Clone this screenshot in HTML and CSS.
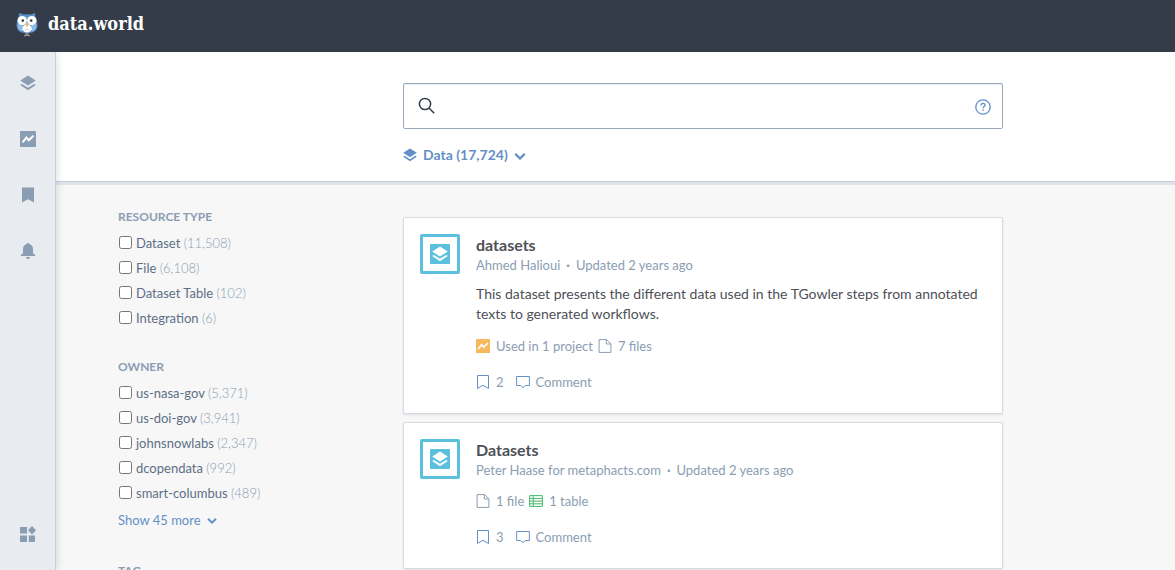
FILE: index.html
```html
<!DOCTYPE html>
<html lang="en">
<head>
    <meta charset="UTF-8">
    <meta name="viewport" content="width=device-width, initial-scale=1.0">
    <title>Search | data.world</title>
    <link rel="stylesheet" href="styles.css">
</head>
<body>
    <!-- shared icons -->
    <svg class="sprite" aria-hidden="true">
        <symbol id="icon-layers" viewBox="0 0 16 16">
            <path d="M8 .5 15.8 5.5 8 10.5 .2 5.5z"/>
            <path d="M1.9 8.9 8 12.8 14.1 8.9 15.8 10 8 15.2 .2 10z"/>
        </symbol>
        <symbol id="icon-project" viewBox="0 0 16 16">
            <path d="M1 0h14a1 1 0 0 1 1 1v14a1 1 0 0 1-1 1H1a1 1 0 0 1-1-1V1a1 1 0 0 1 1-1z"/>
            <path class="icon-line" d="M2.6 11.400 6.400 6.600 8.800 9.200 13.400 4.800"/>
        </symbol>
        <symbol id="icon-bookmark" viewBox="0 0 14 16">
            <path d="M1.500 1.500h11v13L7 11.300l-5.500 3.200z"/>
        </symbol>
        <symbol id="icon-comment" viewBox="0 0 14 14">
            <path d="M.6 1.500h12.800v9H9.500L7 12.500 4.500 10.500H.6z"/>
        </symbol>
        <symbol id="icon-file" viewBox="0 0 13 14">
            <path d="M.6.6h7.600l4.200 4.200v8.600H.6z"/>
            <path d="M7.800.6v4.400h4.500"/>
        </symbol>
        <symbol id="icon-table" viewBox="0 0 14 12">
            <path d="M.6.6h12.800v10.800H.6zM.6 3.400h12.800M.6 6.100h12.800M.6 8.800h12.800M4.200.6v10.800"/>
        </symbol>
        <symbol id="icon-chevron" viewBox="0 0 10 6">
            <path d="M1 .8 5 4.700 9 .8"/>
        </symbol>
    </svg>

    <header class="topbar">
        <a class="brand" href="#">
            <svg class="brand-owl" viewBox="0 0 22 25" aria-hidden="true">
                <path fill="#5b8fc9" d="M3 1 7.500 2.600Q11 1.700 14.500 2.600L19 1l.3 4.500q2.700 4 2 9.500-.8 4-5 5.500-5.300 1.600-10.600 0Q1.500 19 .7 15 0 9.500 2.700 5.500z"/>
                <path fill="#8dbce6" d="M1.600 12q-.6 6 4.600 7.600L8 14zM20.400 12q.6 6-4.600 7.600L14 14z"/>
                <path fill="#fff" d="M11 11.500q4.500 2 5 6-2 3-5 3T6 17.500q.5-4 5-6z"/>
                <circle cx="6.200" cy="8.600" r="4.700" fill="#fff"/>
                <circle cx="15.800" cy="8.600" r="4.700" fill="#fff"/>
                <circle cx="6.800" cy="8.600" r="1.300" fill="#333c48"/>
                <circle cx="15.200" cy="8.600" r="1.300" fill="#333c48"/>
                <path fill="#e9b169" d="M9.300 11.800 11 10.600l1.700 1.200L11 15.400z"/>
                <path d="M8.500 17l1.200 1 1.300-1 1.300 1 1.200-1" fill="none" stroke="#a8c9e8" stroke-width=".7"/>
                <path d="M10 20.500V24M12 20.500V24M8 24.200l2-1.200h2l2 1.200" fill="none" stroke="#b5aa9b" stroke-width="1"/>
            </svg>
            <span class="brand-name">data.world</span>
        </a>
    </header>

    <div class="layout">
        <nav class="sidenav" aria-label="Main">
            <a class="sidenav-link" href="#" aria-label="Datasets"><svg><use href="#icon-layers"/></svg></a>
            <a class="sidenav-link" href="#" aria-label="Projects"><svg><use href="#icon-project"/></svg></a>
            <a class="sidenav-link" href="#" aria-label="Bookmarks"><svg viewBox="0 0 16 16"><path d="M2 .5h12v15L8 12.300 2 15.500z"/></svg></a>
            <a class="sidenav-link" href="#" aria-label="Notifications"><svg viewBox="0 0 16 16"><path d="M8 0c.8 0 1.200.5 1.300 1.100C11.700 1.700 13 3.600 13 6v4.300l2.300 1.900v.8H.7v-.8L3 10.300V6c0-2.400 1.300-4.300 3.700-4.900C6.800.5 7.200 0 8 0zM6 14h4a2 2 0 0 1-4 0z"/></svg></a>
            <a class="sidenav-link sidenav-apps" href="#" aria-label="Integrations"><svg viewBox="0 0 16 16"><path d="M0 1h7v6.500H0zM0 9.500h7V16H0zM8.800 9.500H15V16H8.800zM12 0l4 4.200-4 4.200-4-4.200z"/></svg></a>
        </nav>

        <main class="content">
            <section class="search">
                <div class="grid">
                    <form class="search-form">
                        <div class="search-box">
                            <svg class="search-icon" viewBox="0 0 18 18" aria-hidden="true"><circle cx="7" cy="7" r="5.600"/><path d="M11.200 11.200l5 5"/></svg>
                            <input class="search-input" type="text" aria-label="Search">
                            <button class="help" type="button" aria-label="Search help">
                                <svg viewBox="0 0 16 16"><circle cx="8" cy="8" r="7.200"/><path d="M6 6.400c0-2.600 4.100-2.500 4.100-.2C10.100 7.600 8.100 7.600 8.100 9.300M8.100 10.500v1.400"/></svg>
                            </button>
                        </div>
                        <button class="scope" type="button">
                            <svg class="scope-icon" aria-hidden="true"><use href="#icon-layers"/></svg>
                            Data (17,724)
                            <svg class="chevron" aria-hidden="true"><use href="#icon-chevron"/></svg>
                        </button>
                    </form>
                </div>
            </section>

            <div class="grid">
                <aside class="filters">
                    <section class="filter">
                        <h2>Resource type</h2>
                        <label><input type="checkbox">Dataset <span>(11,508)</span></label>
                        <label><input type="checkbox">File <span>(6,108)</span></label>
                        <label><input type="checkbox">Dataset Table <span>(102)</span></label>
                        <label><input type="checkbox">Integration <span>(6)</span></label>
                    </section>
                    <section class="filter">
                        <h2>Owner</h2>
                        <label><input type="checkbox">us-nasa-gov <span>(5,371)</span></label>
                        <label><input type="checkbox">us-doi-gov <span>(3,941)</span></label>
                        <label><input type="checkbox">johnsnowlabs <span>(2,347)</span></label>
                        <label><input type="checkbox">dcopendata <span>(992)</span></label>
                        <label><input type="checkbox">smart-columbus <span>(489)</span></label>
                        <button class="show-more" type="button">Show 45 more <svg class="chevron" aria-hidden="true"><use href="#icon-chevron"/></svg></button>
                    </section>
                    <section class="filter">
                        <h2>Tag</h2>
                    </section>
                </aside>

                <div class="results">
                    <article class="card">
                        <div class="avatar"><span><svg><use href="#icon-layers"/></svg></span></div>
                        <div class="card-body">
                            <h3><a href="#">datasets</a></h3>
                            <p class="byline"><a href="#">Ahmed Halioui</a><span class="dot">·</span>Updated 2 years ago</p>
                            <p class="description">This dataset presents the different data used in the TGowler steps from annotated texts to generated workflows.</p>
                            <div class="meta">
                                <span><svg class="icon-used"><use href="#icon-project"/></svg>Used in 1 project</span>
                                <span><svg class="icon-file"><use href="#icon-file"/></svg>7 files</span>
                            </div>
                            <div class="actions">
                                <button type="button"><svg><use href="#icon-bookmark"/></svg>2</button>
                                <button type="button"><svg class="icon-comment"><use href="#icon-comment"/></svg>Comment</button>
                            </div>
                        </div>
                    </article>

                    <article class="card">
                        <div class="avatar"><span><svg><use href="#icon-layers"/></svg></span></div>
                        <div class="card-body">
                            <h3><a href="#">Datasets</a></h3>
                            <p class="byline"><a href="#">Peter Haase for metaphacts.com</a><span class="dot">·</span>Updated 2 years ago</p>
                            <div class="meta">
                                <span><svg class="icon-file"><use href="#icon-file"/></svg>1 file</span>
                                <span><svg class="icon-table"><use href="#icon-table"/></svg>1 table</span>
                            </div>
                            <div class="actions">
                                <button type="button"><svg><use href="#icon-bookmark"/></svg>3</button>
                                <button type="button"><svg class="icon-comment"><use href="#icon-comment"/></svg>Comment</button>
                            </div>
                        </div>
                    </article>
                </div>
            </div>
        </main>
    </div>
</body>
</html>
```
FILE: styles.css
```css
* {
    box-sizing: border-box;
}

body {
    display: flex;
    flex-direction: column;
    height: 100vh;
    margin: 0;
    overflow: hidden;
    font-family: Lato, "Liberation Sans", sans-serif;
    font-size: 13px;
    line-height: 20px;
    color: #4e5057;
    background-color: #f7f7f7;
}

a {
    color: inherit;
    text-decoration: none;
}

button {
    display: inline-flex;
    align-items: center;
    padding: 0;
    border: none;
    background: none;
    font: inherit;
    color: inherit;
    cursor: pointer;
}

h2, h3, p {
    margin: 0;
}

.sprite {
    display: none;
}

/* header */
.topbar {
    display: flex;
    align-items: center;
    flex: none;
    height: 52px;
    padding: 0 16px 4px;
    background-color: #333c48;
}

.brand {
    display: flex;
    align-items: center;
    gap: 10px;
    color: #fff;
}

.brand-owl {
    width: 22px;
    height: 25px;
}

.brand-name {
    font-family: "DejaVu Serif Condensed", "DejaVu Serif", serif;
    font-size: 18px;
    font-weight: bold;
}

.layout {
    display: flex;
    flex: 1;
    min-height: 0;
}

/* left navigation */
.sidenav {
    display: flex;
    flex-direction: column;
    align-items: center;
    flex: none;
    gap: 40px;
    width: 56px;
    padding: 23px 0 28px;
    border-right: 1px solid #c6ced9;
    background-color: #e8ebf0;
    box-shadow: 0 0 8px rgba(51, 60, 72, 0.2);
    z-index: 1;
}

.sidenav-link {
    display: flex;
}

.sidenav-link svg {
    width: 16px;
    height: 16px;
    fill: #8b9db2;
}

.sidenav-apps {
    margin-top: auto;
}

.icon-line {
    fill: none;
    stroke: #fff;
    stroke-width: 2;
}

.content {
    flex: 1;
    min-width: 0;
}

.grid {
    display: grid;
    grid-template-columns: 253px 600px;
    column-gap: 32px;
    max-width: 995px;
    margin: 0 auto;
}

/* search */
.search {
    padding: 31px 0 15px;
    border-bottom: 3px solid #dfe3e9;
    background-color: #fff;
    box-shadow: inset 0 -1px #c6ced9;
}

.search-form {
    grid-column: 2;
}

.search-box {
    display: flex;
    align-items: center;
    height: 46px;
    padding: 0 11px 0 14px;
    border: 1px solid #9aa9ba;
    border-radius: 2px;
    box-shadow: inset 0 1px 1px rgba(51, 60, 72, 0.1);
}

.search-icon {
    width: 18px;
    height: 18px;
    fill: none;
    stroke: #333c48;
    stroke-width: 1.5;
}

.search-input {
    flex: 1;
    height: 40px;
    padding: 0 12px;
    border: none;
    outline: none;
    background: none;
    font: inherit;
}

.help {
    padding-top: 2px;
}

.help svg {
    width: 16px;
    height: 16px;
    fill: none;
    stroke: #5f8fca;
    stroke-width: 1.3;
}

.scope {
    gap: 6px;
    margin-top: 16px;
    font-size: 14px;
    font-weight: bold;
    color: #6590c6;
}

.scope-icon {
    width: 14px;
    height: 14px;
    fill: #6590c6;
}

.chevron {
    width: 10px;
    height: 6px;
    fill: none;
    stroke: #6590c6;
    stroke-width: 2;
}

.scope .chevron {
    width: 12px;
    height: 7px;
    margin-top: 2px;
}

/* filters */
.filters {
    padding-top: 24px;
}

.filter {
    display: flex;
    flex-direction: column;
    align-items: flex-start;
}

.filter + .filter {
    padding-top: 28px;
}

.filter h2 {
    padding-bottom: 6px;
    font-size: 12px;
    line-height: 16px;
    font-weight: bold;
    text-transform: uppercase;
    color: #8b9db2;
}

.filter label {
    line-height: 25px;
    color: #5d6f85;
}

.filter label input {
    margin: 0 4px 0 1px;
    vertical-align: -1px;
}

.filter label span {
    font-weight: 300;
    color: #8b9db2;
}

.show-more {
    gap: 6px;
    margin: 2px 0;
    line-height: 25px;
    color: #6590c6;
}

/* result cards */
.results {
    display: flex;
    flex-direction: column;
    align-self: start;
    gap: 8px;
    padding-top: 32px;
}

.card {
    display: flex;
    gap: 16px;
    padding: 16px 16px 21px;
    border: 1px solid #d6dae2;
    border-radius: 2px;
    background-color: #fff;
    box-shadow: 0 1px 2px rgba(51, 60, 72, 0.12);
}

.avatar {
    display: flex;
    align-items: center;
    justify-content: center;
    flex: none;
    width: 40px;
    height: 40px;
    border: 3px solid #5bc0de;
    border-radius: 2px;
}

.avatar span {
    display: flex;
    padding: 2px;
    border-radius: 1px;
    background-color: #5bc0de;
}

.avatar svg {
    width: 16px;
    height: 16px;
    fill: #fff;
}

.card-body {
    flex: 1;
}

.card h3 {
    font-size: 16px;
    line-height: 21px;
    font-weight: bold;
}

.byline {
    color: #8b9db2;
}

.dot {
    padding: 0 6px;
    font-weight: bold;
}

.description {
    padding: 9px 0 1px;
    font-size: 14px;
}

.meta {
    display: flex;
    gap: 5px;
    padding-top: 11px;
    color: #8b9db2;
}

.meta span {
    display: flex;
    align-items: center;
    gap: 6px;
}

.meta svg {
    width: 14px;
    height: 14px;
    fill: none;
}

.meta .icon-used {
    fill: #f6b95c;
}

.meta .icon-file {
    stroke: #8b9db2;
}

.meta .icon-table {
    stroke: #45b86b;
}

.actions {
    display: flex;
    gap: 12px;
    padding-top: 16px;
    color: #8b9db2;
}

.actions button {
    gap: 6px;
}

.actions svg {
    width: 14px;
    height: 16px;
    fill: none;
    stroke: #6590c6;
}

.actions .icon-comment {
    height: 14px;
}
```
